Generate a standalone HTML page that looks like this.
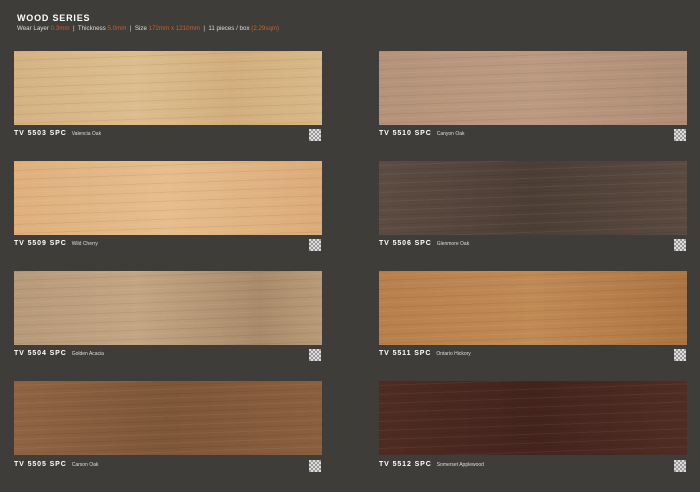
<!DOCTYPE html><html><head><style>
body{margin:0;width:700px;height:492px;background:#3e3d39;font-family:"Liberation Sans",sans-serif;position:relative;overflow:hidden}
.t{position:absolute;left:17px;top:13px;color:#fff;font-weight:bold;font-size:9px;letter-spacing:.8px}
.s{position:absolute;left:17px;top:25px;color:#ddd;font-size:6.2px;white-space:nowrap}
.s b{color:#c8602a;font-weight:normal}
.p{position:absolute;width:308px;height:74px}
.p::after{content:"";position:absolute;inset:0;background:repeating-linear-gradient(178deg,rgba(0,0,0,.06) 0 1px,transparent 1px 4px,rgba(255,255,255,.05) 4px 5px,transparent 5px 9px)}
.l{position:absolute;color:#fff;font-size:7px;font-weight:bold;letter-spacing:.9px;white-space:nowrap}
.l span{font-weight:normal;font-size:5px;letter-spacing:0;margin-left:5px;color:#ddd}
.q{position:absolute;width:12px;height:12px;background:repeating-conic-gradient(#999 0 25%,#ddd 0 50%) 0 0/4px 4px}
</style></head><body>
<div class="t">WOOD SERIES</div>
<div class="s">Wear Layer <b>0.3mm</b> &nbsp;|&nbsp; Thickness <b>5.0mm</b> &nbsp;|&nbsp; Size <b>172mm x 1210mm</b> &nbsp;|&nbsp; 11 pieces / box <b>(2.29sqm)</b></div>

<div class="p" style="left:14px;top:51px;background:linear-gradient(90deg,#d4b283,#dcbd8e 40%,#d2ae7e 70%,#d8b888)"></div>
<div class="p" style="left:379px;top:51px;background:linear-gradient(90deg,#b59379,#bc9a80 50%,#b08e75)"></div>
<div class="p" style="left:14px;top:161px;background:linear-gradient(90deg,#dfb07c,#e6bd8c 50%,#dcab78)"></div>
<div class="p" style="left:379px;top:161px;background:linear-gradient(90deg,#5d4c42,#4d3e35 50%,#5a4a40)"></div>
<div class="p" style="left:14px;top:271px;background:linear-gradient(90deg,#b79a7a,#c3a583 40%,#a98a6a 80%,#b99a78)"></div>
<div class="p" style="left:379px;top:271px;background:linear-gradient(90deg,#b8804c,#c08a55 50%,#ad7441)"></div>
<div class="p" style="left:14px;top:381px;background:linear-gradient(90deg,#8f6444,#7e5638 50%,#8a5f3f)"></div>
<div class="p" style="left:379px;top:381px;background:linear-gradient(90deg,#4e2c23,#43241d 50%,#4f2d24)"></div>

<div class="l" style="left:14px;top:130px">TV 5503 SPC<span>Valencia Oak</span></div>
<div class="l" style="left:379px;top:130px">TV 5510 SPC<span>Canyon Oak</span></div>
<div class="l" style="left:14px;top:240px">TV 5509 SPC<span>Wild Cherry</span></div>
<div class="l" style="left:379px;top:240px">TV 5506 SPC<span>Glenmore Oak</span></div>
<div class="l" style="left:14px;top:350px">TV 5504 SPC<span>Golden Acacia</span></div>
<div class="l" style="left:379px;top:350px">TV 5511 SPC<span>Ontario Hickory</span></div>
<div class="l" style="left:14px;top:461px">TV 5505 SPC<span>Carson Oak</span></div>
<div class="l" style="left:379px;top:461px">TV 5512 SPC<span>Somerset Applewood</span></div>

<div class="q" style="left:309px;top:129px"></div>
<div class="q" style="left:674px;top:129px"></div>
<div class="q" style="left:309px;top:239px"></div>
<div class="q" style="left:674px;top:239px"></div>
<div class="q" style="left:309px;top:349px"></div>
<div class="q" style="left:674px;top:349px"></div>
<div class="q" style="left:309px;top:460px"></div>
<div class="q" style="left:674px;top:460px"></div>
</body></html>
